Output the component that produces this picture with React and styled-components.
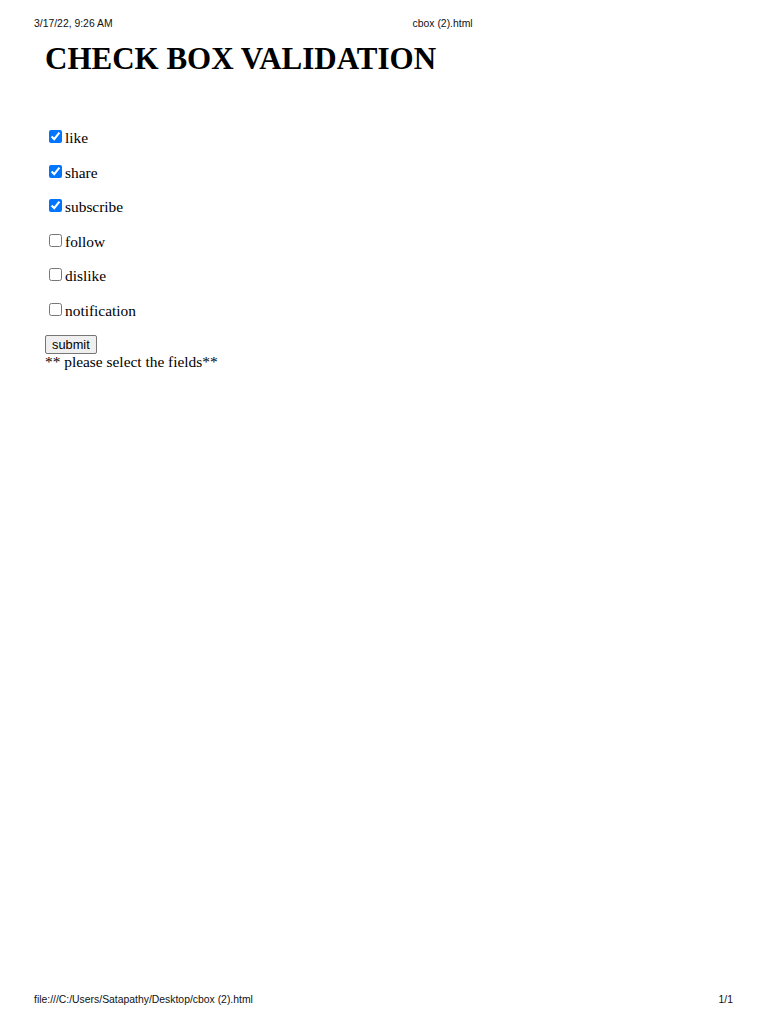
import styled, { createGlobalStyle } from "styled-components";

const GlobalStyle = createGlobalStyle`
  html, body {
    margin: 0;
    padding: 0;
    background: #ffffff;
  }
`;

const Page = styled.div`
  height: 1024px;
  display: flex;
  flex-direction: column;
  font-family: "Liberation Serif", "Times New Roman", serif;
  color: #000;
`;

const PrintBar = styled.div`
  display: flex;
  align-items: center;
  justify-content: ${(p) => (p.spread ? "space-between" : "flex-start")};
  padding: 0 35px 0 34px;
  height: 12px;
  margin: ${(p) => p.margin};
  font-family: "Liberation Sans", Arial, sans-serif;
  font-size: 10.4px;
  color: #111;
  white-space: nowrap;
`;

const DocTitle = styled.span`
  margin-left: 300px;
`;

const Main = styled.main`
  flex: 1;
  padding-left: 45px;
`;

const Heading = styled.h1`
  margin: 13px 0 0;
  font-size: 31px;
  line-height: 34px;
  font-weight: bold;
`;

const Options = styled.div`
  display: flex;
  flex-direction: column;
  gap: 17.6px;
  margin-top: 53px;
`;

const Option = styled.label`
  display: flex;
  align-items: baseline;
  font-size: 15.4px;
  line-height: 17px;
`;

const Box = styled.input.attrs({ type: "checkbox" })`
  width: 13px;
  height: 13px;
  margin: 0 3px 0 4px;
  accent-color: #0075ff;
`;

const Submit = styled.button`
  display: block;
  margin-top: 16px;
  font-family: "Liberation Sans", Arial, sans-serif;
  font-size: 12.8px;
  padding: 1px 6px;
  height: 19px;
  background: #efefef;
  border: 1px solid #767676;
  border-radius: 2px;
  color: #000;
`;

const Message = styled.div`
  font-size: 15.4px;
  line-height: 15px;
`;

const options = [
  { label: "like", checked: true },
  { label: "share", checked: true },
  { label: "subscribe", checked: true },
  { label: "follow", checked: false },
  { label: "dislike", checked: false },
  { label: "notification", checked: false },
];

export default function App() {
  return (
    <>
      <GlobalStyle />
      <Page>
        <PrintBar margin="17px 0 0">
          <span>3/17/22, 9:26 AM</span>
          <DocTitle>cbox (2).html</DocTitle>
        </PrintBar>
        <Main>
          <Heading>CHECK BOX VALIDATION</Heading>
          <Options>
            {options.map((o) => (
              <Option key={o.label}>
                <Box defaultChecked={o.checked} />
                {o.label}
              </Option>
            ))}
          </Options>
          <Submit>submit</Submit>
          <Message>** please select the fields**</Message>
        </Main>
        <PrintBar spread margin="0 0 19px">
          <span>file:///C:/Users/Satapathy/Desktop/cbox (2).html</span>
          <span>1/1</span>
        </PrintBar>
      </Page>
    </>
  );
}
